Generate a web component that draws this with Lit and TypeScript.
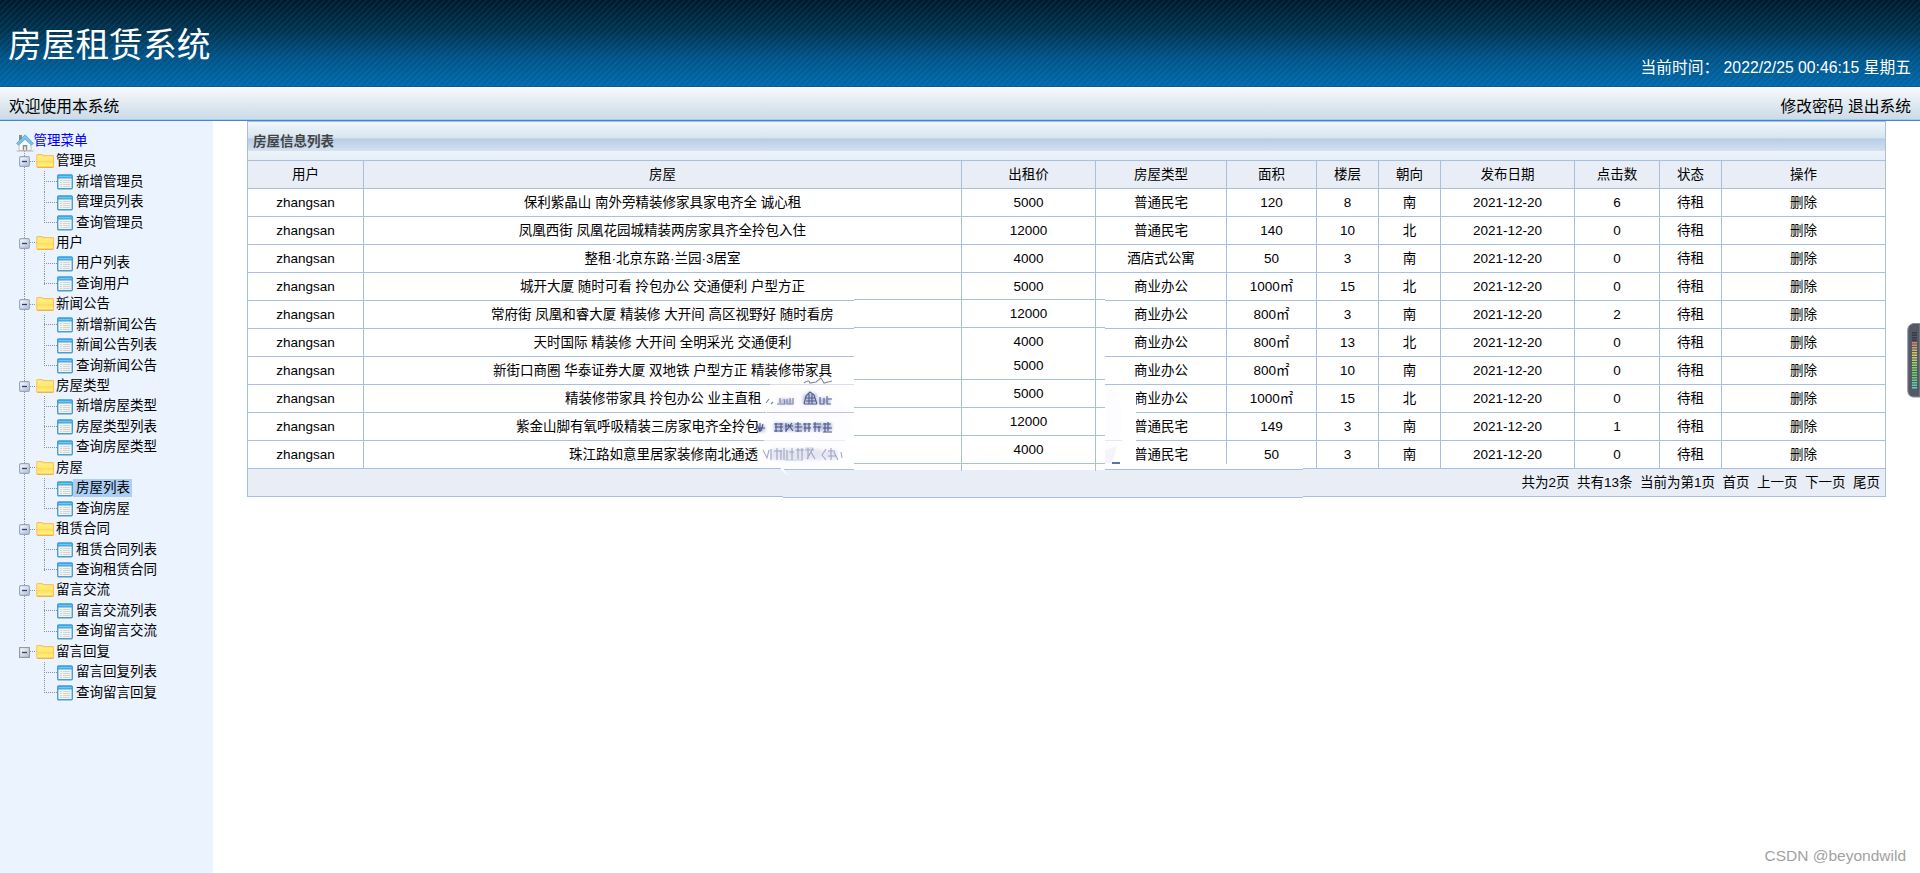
import { LitElement, html, css, svg } from "lit";
import { customElement } from "lit/decorators.js";

const MENU: [string, string[]][] = [
  ["管理员", ["新增管理员", "管理员列表", "查询管理员"]],
  ["用户", ["用户列表", "查询用户"]],
  ["新闻公告", ["新增新闻公告", "新闻公告列表", "查询新闻公告"]],
  ["房屋类型", ["新增房屋类型", "房屋类型列表", "查询房屋类型"]],
  ["房屋", ["房屋列表", "查询房屋"]],
  ["租赁合同", ["租赁合同列表", "查询租赁合同"]],
  ["留言交流", ["留言交流列表", "查询留言交流"]],
  ["留言回复", ["留言回复列表", "查询留言回复"]],
];

const HEAD = ["用户", "房屋", "出租价", "房屋类型", "面积", "楼层", "朝向", "发布日期", "点击数", "状态", "操作"];

// title, price, type, area, floor, orientation, clicks
const ROWS = [
  ["保利紫晶山 南外旁精装修家具家电齐全 诚心租", "5000", "普通民宅", "120", "8", "南", "6"],
  ["凤凰西街 凤凰花园城精装两房家具齐全拎包入住", "12000", "普通民宅", "140", "10", "北", "0"],
  ["整租·北京东路·兰园·3居室", "4000", "酒店式公寓", "50", "3", "南", "0"],
  ["城开大厦 随时可看 拎包办公 交通便利 户型方正", "5000", "商业办公", "1000㎡", "15", "北", "0"],
  ["常府街 凤凰和睿大厦 精装修 大开间 高区视野好 随时看房", "", "商业办公", "800㎡", "3", "南", "2"],
  ["天时国际 精装修 大开间 全明采光 交通便利", "", "商业办公", "800㎡", "13", "北", "0"],
  ["新街口商圈 华泰证券大厦 双地铁 户型方正 精装修带家具", "", "商业办公", "800㎡", "10", "南", "0"],
  ["精装修带家具 拎包办公 业主直租", "", "商业办公", "1000㎡", "15", "北", "0"],
  ["紫金山脚有氧呼吸精装三房家电齐全拎包", "", "普通民宅", "149", "3", "南", "1"],
  ["珠江路如意里居家装修南北通透", "", "普通民宅", "50", "3", "南", "0"],
];
const SHIFT: Record<number, string> = { 7: "t8", 8: "t9", 9: "t10" };

const houseIcon = html`<svg class="home" width="18" height="18" viewBox="0 0 18 18">
  <rect x="3" y="1" width="3" height="5" fill="#8a8a8a"/>
  <path d="M3 8.500 9 3l6 5.500V16.500H3z" fill="#f6f6f4" stroke="#b5b5b5" stroke-width=".8"/>
  <rect x="6.800" y="11" width="4.400" height="5.500" fill="#8b8b8b"/>
  <rect x="8" y="12.500" width="2" height="4" fill="#e4e4e4"/>
  <path d="M.6 9.400 9 .8l8.400 8.600-2 1.700L9 5.200 2.600 11.100z" fill="#74c6ef" stroke="#4b97c4" stroke-width=".7"/>
  <path d="M.5 17h17" stroke="#b4b7bb" stroke-width="1"/></svg>`;

const folderIcon = html`<svg class="folder" width="18" height="16" viewBox="0 0 18 16">
  <defs><linearGradient id="f" x1="0" y1="0" x2="0" y2="1"><stop offset="0" stop-color="#fff08a"/><stop offset=".5" stop-color="#ffe96c"/><stop offset=".52" stop-color="#ffdb52"/><stop offset=".85" stop-color="#fff08c"/><stop offset="1" stop-color="#ffcf5a"/></linearGradient></defs>
  <path d="M.8 2.800q0-1.200 1-1.200h4.400l1.200 1h9.200q.9 0 .9.900v10q0 .9-.9.900H1.700q-.9 0-.9-.9z" fill="url(#f)" stroke="#fbc25c" stroke-width="1.100"/>
  <path d="M1.500 14.400h15.400" stroke="#f5a93a" stroke-width=".8"/></svg>`;

const pageIcon = html`<svg class="page" width="16" height="16" viewBox="0 0 16 16">
  <rect x=".7" y=".9" width="14.600" height="13.800" rx="1" fill="#f2f4f4" stroke="#4c9fc9" stroke-width="1.400"/>
  <path d="M.7.900h14.600V4.500H.7z" fill="#3aa6e4"/><path d="M1.500 2.700h13" stroke="#8bd0f5" stroke-width=".9"/>
  <path d="M3 6.500h2M3 8.500h2M3 10.500h2M3 12.500h2M6 6.500h7.300M6 8.500h7.300M6 10.500h7.300M6 12.500h7.300" stroke="#d2d4d5" stroke-width="1"/></svg>`;

const minus = (last: boolean) => html`<svg class="minus" width="11" height="11" viewBox="0 0 11 11">
  <defs><linearGradient id="m" x1="0" y1="0" x2="1" y2="1"><stop offset="0" stop-color="#fff"/><stop offset="1" stop-color=${last ? "#ececec" : "#a9b9d4"}/></linearGradient></defs>
  <rect x=".6" y=".6" width="9.800" height="9.800" rx=${last ? 0 : 1.4} fill="url(#m)" stroke=${last ? "#959595" : "#97a5be"} stroke-width="1.100"/>
  <path d="M3 5.500h5" stroke=${last ? "#444" : "#24427e"} stroke-width="1.300"/></svg>`;

@customElement("app-root")
export class AppRoot extends LitElement {
  static styles = css`
    :host { display: block; position: relative; height: 873px; overflow: hidden; background: #fff; color: #000;
      font: 13.5px/18px "Liberation Sans", "Noto Sans CJK SC", sans-serif; }
    * { box-sizing: border-box; }
    svg { display: block; flex: none; }
    .top { height: 87px; display: flex; justify-content: space-between; color: #fff; padding: 0 9px; border-bottom: 1px solid #17568f;
      background: repeating-linear-gradient(135deg, rgba(120,180,220,.09) 0 1px, transparent 1px 4.2426px), linear-gradient(#001a2c, #00334f 35%, #005489 68%, #0069aa); }
    .brand { font-size: 33.75px; line-height: 48px; padding-top: 21px; margin-left: -1px; }
    .clock { font-size: 15.75px; line-height: 20px; padding-top: 58px; white-space: pre; }
    .bar { height: 34px; display: flex; justify-content: space-between; padding: 10px 9px 0; font-size: 15.75px; line-height: 20px;
      border-bottom: 1px solid #3f86d4; background: linear-gradient(#f8fafb, #e3ebf1 45%, #ccdbe8 97%, #a9c9e6 98%); }
    .body { display: flex; height: 752px; }
    .side { width: 213px; background: #ebf3ff; padding: 11px 0 0 16px; }
    .root { display: flex; height: 19px; color: #00f; }
    .home { margin-top: 2px; }
    .root span { line-height: 18px; margin-left: -.5px; }
    .tree { padding-left: 8px; }
    .group:not(.last) { background: repeating-linear-gradient(#8a929e 0 1px, transparent 1px 2px) 0 0 / 1px 100% no-repeat; }
    .node { display: flex; height: 20.44px; align-items: center; }
    .minus { margin-left: -5px; margin-top: 1px; }
    .dash { height: 1px; background: repeating-linear-gradient(90deg, #8a929e 0 1px, transparent 1px 2px); }
    .d1 { width: 6px; }
    .d2 { width: 13px; }
    .node .folder { margin-top: 0; }
    .node span { padding: 0 2px; line-height: 18px; }
    .kids { margin-left: 20px; }
    .kids .node { background: repeating-linear-gradient(#8a929e 0 1px, transparent 1px 2px) 0 0 / 1px 100% no-repeat; }
    .kids .node:last-child { background-size: 1px 11px; }
    .kids .page { margin-top: 1px; }
    .kids .node span { padding: 0 2px 0 3px; }
    .kids .node .sel { background: #abcff6; }
    .main { margin-left: 34px; width: 1639px; }
    .caption { height: 39px; border: 1px solid #a8c0de; border-bottom: 0; padding: 11px 5px 0; font-weight: bold; color: #444;
      background: linear-gradient(#f1f6fa, #d9e6f0 40%, #b9cde4 46%, #d3e1f0 76%, #ecf3f9 77%, #e6eef7); }
    .grid { display: grid; grid-template-columns: 117px 598px 134px 131px 90px 62px 62px 134px 85px 62px 164px;
      grid-auto-rows: 28px; border-top: 1px solid #a8c0de; }
    .c { border-right: 1px solid #a8c0de; border-bottom: 1px solid #a8c0de; text-align: center; line-height: 27px; white-space: pre; overflow: hidden; }
    .c:nth-child(11n+1) { border-left: 1px solid #a8c0de; }
    .h { background: #e9eef6; line-height: 28px; }
    .t8 { text-align: left; padding-left: 201px; }
    .t9 { text-align: left; padding-left: 152px; }
    .t10 { text-align: left; padding-left: 205px; }
    .foot { height: 28px; background: #e9eef6; border: 1px solid #a8c0de; border-top: 0; display: flex; justify-content: flex-end; gap: 7.5px; padding-right: 5px; line-height: 28px; }
    .patch { position: absolute; background: #fff; }
    .prices { left: 854px; top: 299px; width: 251px; height: 171px; display: flex; flex-direction: column; }
    .p { height: 28px; flex: none; display: grid; grid-template-columns: 108px 134px 9px; border-top: 1px solid #a8c0de; line-height: 27px; text-align: center; }
    .p.tall { height: 52px; }
    .p.end { height: 8px; }
    .p i { border-right: 1px solid #a8c0de; font-style: normal; }
    .p i:last-child { border: 0; }
    .p b { display: block; font-weight: normal; line-height: 22px; }
    .mask { left: 1105px; top: 385px; width: 31px; height: 84px; }
    .vend { left: 1105px; top: 464px; width: 198px; height: 5px; }
    .lower { left: 783px; top: 468px; width: 520px; height: 30px; background: #e9eef6; border-bottom: 1px solid #a8c0de; display: flex; justify-content: space-between; }
    .lower u { height: 2px; background: #fff; border-bottom: 1px solid #a8c0de; }
    .l1 { width: 71px; }
    .l2 { width: 198px; }
    .smudge { position: absolute; left: 755px; top: 376px; }
    .remnant { position: absolute; left: 1105px; top: 385px; }
    .meter { position: absolute; left: 1907px; top: 323px; }
    .mark { position: absolute; right: 14px; top: 846px; font-size: 15.5px; line-height: 20px; color: #a2a2a2; }
  `;

  smudge() {
    return html`<svg class="smudge" width="100" height="102" viewBox="0 0 100 102">
      <defs><filter id="b" x="-10%" y="-10%" width="120%" height="120%"><feGaussianBlur stdDeviation=".6"/></filter>
      <filter id="b2" x="-20%" y="-50%" width="140%" height="200%"><feGaussianBlur stdDeviation="1.600"/></filter>
      <radialGradient id="w"><stop offset=".86" stop-color="#fdfdff"/><stop offset="1" stop-color="#fff"/></radialGradient></defs>
      <path d="M99 8H40Q10 22 7 52q2 26 26 48l-5-8H99z" fill="url(#w)"/>
      <path d="M15 8.500H99" stroke="#dcdcea"/><path d="M12 36.500H99" stroke="#c3c3da"/><path d="M10 64.500H90" stroke="#ebebf4"/>
      <g filter="url(#b2)" fill="#8f96bd" opacity=".55">
        <path d="M24 23h14v5H24zM48 20l6-4 8 2v10H48zM64 22h11v6H64zM2 49h8v7H2zM19 47h20v8H19zM38 48h18v7H38zM58 47h19v8H58z"/>
      </g>
      <g fill="#b9bdd8" opacity=".35" filter="url(#b2)"><path d="M15 73h52v11H15zM68 74h14v9H68z"/></g>
      <g filter="url(#b)" fill="none" stroke="#4a5390" stroke-width="1.100">
        <path d="M49 7q5-4 6 0l6-1 5-4 3 5 8-2" stroke="#8088ab"/>
        <path d="M11 27l3-4M16 28l2-2M22 28h8l-1-5M25 22v5M32 23v5h6v-6M35 22v6" stroke="#7a82ac"/>
        <path d="M49 28l2-8 4-4 4 3 3 9M51 22h9M51 25h10M54 18v10M57 18v10M49 28h13M65 21v7h4v-6M72 20v8h4M73 23h4" stroke="#505c98"/>
        <path d="M2 48l3 8M5 47v9M2 52h8M8 48l-2 7M19 48h9M20 51h8M19 55h9M21 47v9M26 47v9M31 47v9M30 50h8M33 48l5 7M37 47l-6 8M40 48h6M40 51h7M40 55h7M43 46v10M48 48h8M49 52h7M50 47v9M54 47v9M58 48h8M58 51h8M60 46v10M64 50v6M68 48h8M70 47v9M73 46v9M68 52h9M68 56h9"/>
        <path d="M8 74l4 8 2-8M16 73v11M19 75h8M22 72v12M26 74v10M29 72v12M32 74v10M34 76h5M37 72v12M41 74h8M43 72v11M47 72v12M50 74h9M53 72v11M56 76l4 7M58 72l-6 11M71 73l-4 6 4 5M73 75h7M76 72v12M73 80h8M79 76l4 8M86 76l1 6" stroke="#8d95b8" opacity=".8"/>
        <path d="M30 84h18M50 72h8" stroke="#8fc2bd" opacity=".6"/>
      </g></svg>`;
  }

  render() {
    return html`
      <div class="top"><div class="brand">房屋租赁系统</div><div class="clock">当前时间： 2022/2/25 00:46:15 星期五</div></div>
      <div class="bar"><span>欢迎使用本系统</span><span>修改密码 退出系统</span></div>
      <div class="body">
        <div class="side">
          <div class="root">${houseIcon}<span>管理菜单</span></div>
          <div class="tree">${MENU.map(([name, kids], i) => html`
            <div class="group ${i === 7 ? "last" : ""}">
              <div class="node">${minus(i === 7)}<div class="dash d1"></div>${folderIcon}<span>${name}</span></div>
              <div class="kids">${kids.map((k) => html`<div class="node"><div class="dash d2"></div>${pageIcon}<span class=${k === "房屋列表" ? "sel" : ""}>${k}</span></div>`)}</div>
            </div>`)}</div>
        </div>
        <div class="main">
          <div class="caption">房屋信息列表</div>
          <div class="grid">
            ${HEAD.map((h) => html`<div class="c h">${h}</div>`)}
            ${ROWS.map((r, i) => ["zhangsan", r[0], r[1], r[2], r[3], r[4], r[5], "2021-12-20", r[6], "待租", "删除"].map(
              (v, j) => html`<div class="c ${j === 1 ? SHIFT[i] ?? "" : ""}">${v}</div>`))}
          </div>
          <div class="foot"><span>共为2页</span><span>共有13条</span><span>当前为第1页</span><span>首页</span><span>上一页</span><span>下一页</span><span>尾页</span></div>
        </div>
      </div>
      <div class="patch mask"></div>
      <div class="patch vend"></div>
      <div class="patch lower"><u class="l1"></u><u class="l2"></u></div>
      ${this.smudge()}
      <svg class="remnant" width="31" height="80" viewBox="0 0 31 80">
        <path d="M0 0h6q16 26 9 50L8 79H0z" fill="#fdfdff"/>
        <path d="M0 55.500h17" stroke="#e6e6f3"/>
        <path d="M0 65l12-4-5 17H0z" fill="#f4f5fb"/>
        <rect x="7" y="77" width="8" height="2" fill="#5a72ac"/>
      </svg>
      <div class="patch prices">
        <div class="p"><i></i><i>12000</i><i></i></div>
        <div class="p tall"><i></i><i>4000<b>5000</b></i><i></i></div>
        <div class="p"><i></i><i>5000</i><i></i></div>
        <div class="p"><i></i><i>12000</i><i></i></div>
        <div class="p"><i></i><i>4000</i><i></i></div>
        <div class="p end"><i></i><i></i><i></i></div>
      </div>
      <svg class="meter" width="13" height="75" viewBox="0 0 13 75">
        <path d="M13 .5H6Q.8 2 .8 7v61Q1 73 6 74h7z" fill="#555867" stroke="#8b8d99" stroke-width="1"/>
        ${Array.from({ length: 23 }, (_, i) => svg`<rect x="5" y=${(9 + i * 2.5).toFixed(1)} width="5" height="1.500" fill=${i < 4 ? "#383b47" : `hsl(${20 + (i - 4) * 8} 58% 60%)`}/>`)}
      </svg>
      <div class="mark">CSDN @beyondwild</div>`;
  }
}
